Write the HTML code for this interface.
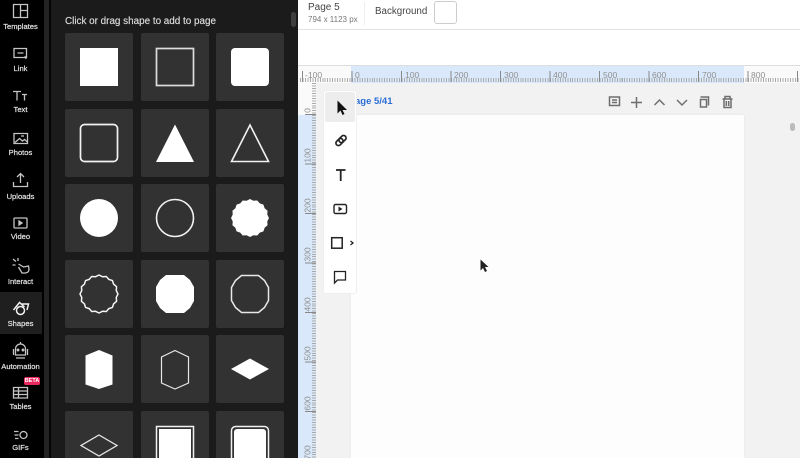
<!DOCTYPE html>
<html><head><meta charset="utf-8"><style>
html,body{margin:0;padding:0;width:800px;height:458px;overflow:hidden;background:#fff}
body{position:relative;font-family:"Liberation Sans",sans-serif}
.a{position:absolute}
.lbl{position:absolute;left:0;width:41px;text-align:center;color:#e2e2e2;font-size:7.6px;line-height:10px;white-space:nowrap;-webkit-text-stroke:.2px #e2e2e2}
.card{position:absolute;width:68px;height:68px;background:#323233;border-radius:2px}
.card svg{position:absolute;left:0;top:0}
.hn{position:absolute;top:70px;font-size:8.6px;line-height:11px;color:#8f8f8f}
.vn{position:absolute;left:297px;width:22px;font-size:8.6px;line-height:11px;color:#8f8f8f;transform:rotate(-90deg);text-align:center}
</style></head><body>
<!-- top bars -->
<div class="a" style="left:298px;top:29px;width:502px;height:1px;background:#e2e2e2"></div>
<div class="a" style="left:308px;top:1px;font-size:10px;line-height:14px;color:#444">Page 5</div>
<div class="a" style="left:308px;top:14px;font-size:8px;line-height:11px;color:#777">794 x 1123 px</div>
<div class="a" style="left:364px;top:2px;width:1px;height:23px;background:#eee"></div>
<div class="a" style="left:375px;top:5px;font-size:9.800px;line-height:14px;color:#444">Background</div>
<div class="a" style="left:434px;top:1px;width:21px;height:21px;border:1px solid #ccc;border-radius:3px;background:#fff"></div>
<!-- canvas -->
<div class="a" style="left:298px;top:83px;width:502px;height:375px;background:#f2f2f2"></div>
<div class="a" style="left:351px;top:115px;width:393px;height:343px;background:#fefdfe;box-shadow:0 0 3px rgba(0,0,0,.06)"></div>
<div class="a" style="left:790px;top:123px;width:5px;height:8px;border-radius:3px;background:#bbb"></div>
<!-- top ruler -->
<div class="a" style="left:298px;top:65px;width:502px;height:18px;background:#fafafa;border-top:1px solid #ddd;box-sizing:border-box"></div>
<div class="a" style="left:351px;top:66px;width:393px;height:17px;background:#d9e9fb"></div>
<div class="a" style="left:300px;top:78px;width:500px;height:4px;background:repeating-linear-gradient(90deg,#aaa 0,#aaa 1px,transparent 1px,transparent 2.475px)"></div>
<div class="a" style="left:302px;top:71px;width:498px;height:11px;background:repeating-linear-gradient(90deg,#888 0,#888 1px,transparent 1px,transparent 49.5px)"></div>
<span class="hn" style="left:305px">-100</span><span class="hn" style="left:355px">0</span><span class="hn" style="left:405px">100</span><span class="hn" style="left:454px">200</span><span class="hn" style="left:504px">300</span><span class="hn" style="left:553px">400</span><span class="hn" style="left:603px">500</span><span class="hn" style="left:652px">600</span><span class="hn" style="left:702px">700</span><span class="hn" style="left:751px">800</span>
<!-- left ruler -->
<div class="a" style="left:298px;top:83px;width:18px;height:375px;background:#fafafa"></div>
<div class="a" style="left:298px;top:115px;width:18px;height:343px;background:#d9e9fb"></div>
<div class="a" style="left:312px;top:83px;width:4px;height:375px;background:repeating-linear-gradient(180deg,#aaa 0,#aaa 1px,transparent 1px,transparent 2.475px)"></div>
<div class="a" style="left:305px;top:114px;width:11px;height:344px;background:repeating-linear-gradient(180deg,#888 0,#888 1px,transparent 1px,transparent 49.5px)"></div>
<span class="vn" style="top:105px">0</span><span class="vn" style="top:150px">100</span><span class="vn" style="top:200px">200</span><span class="vn" style="top:249px">300</span><span class="vn" style="top:299px">400</span><span class="vn" style="top:348px">500</span><span class="vn" style="top:398px">600</span><span class="vn" style="top:447px">700</span>
<!-- page label and actions -->
<div class="a" style="left:355px;top:96px;font-size:9.500px;line-height:12px;color:#2b6fd6;font-weight:bold">age 5/41</div>
<svg class="a" style="left:600px;top:90px" width="140" height="24" fill="none" stroke="#6e6e6e" stroke-width="1.500">
<path d="M9.500 7h10v8.500h-10zM12 10h5M12 12.500h5"/>
<path d="M36.500 7v11M31 12.500h11"/>
<path d="M54.500 15l5-5 5 5M77 10l5 5 5-5"/>
<path d="M100.500 7h8v8.500M100.500 9.500h6v7.500h-6z"/>
<path d="M122.500 9h10M125 8.500v-2h5v2M124 9.500v8h7v-8M126.300 11v5M128.700 11v5"/>
</svg>
<!-- floating toolbar -->
<div class="a" style="left:323px;top:90px;width:34px;height:204px;background:#fff;border:1px solid #eee;border-radius:3px;box-sizing:border-box"></div>
<div class="a" style="left:325px;top:92px;width:30px;height:30px;background:#ededed;border-radius:2px"></div>
<svg class="a" style="left:323px;top:90px" width="36" height="204">
<path d="M14.500 10.500v13l3-3 2 4.500 2-1-2-4h4.500z" fill="#111"/>
<g fill="none" stroke="#222" stroke-width="1.700"><rect x="12.500" y="49.500" width="8" height="5" rx="2.500" transform="rotate(-45 16.500 52)" /><rect x="15.500" y="46.500" width="8" height="5" rx="2.500" transform="rotate(-45 19.500 49)"/></g>
<path d="M13 80h9.500M17.700 80v11" fill="none" stroke="#222" stroke-width="1.800"/>
<rect x="11" y="114.500" width="12.500" height="9" rx="1.500" fill="none" stroke="#222" stroke-width="1.400"/><path d="M15.500 116.500v5l4-2.500z" fill="#222"/>
<rect x="8.700" y="147.700" width="10.500" height="10.500" fill="none" stroke="#222" stroke-width="1.500"/><path d="M27.500 151l2.500 2-2.500 2" fill="none" stroke="#222" stroke-width="1.300"/>
<path d="M11.500 181.500h11v8.500h-8l-3 3z" fill="none" stroke="#222" stroke-width="1.300"/>
</svg>
<svg class="a" style="left:478px;top:258px" width="14" height="16"><path d="M2.500 1.500v11l2.500-2.500 2 4 2-1-2-4h3.500z" fill="#222"/></svg>
<!-- panel -->
<div class="a" style="left:0;top:0;width:298px;height:458px;background:#1b1b1c"></div>
<div class="a" style="left:0;top:0;width:44px;height:458px;background:#000"></div>
<div class="a" style="left:44px;top:0;width:5px;height:458px;background:#232323"></div>
<div class="a" style="left:49px;top:0;width:2px;height:458px;background:#050505"></div>
<div class="a" style="left:291px;top:12px;width:5px;height:15px;background:#3f3f3f;border-radius:3px"></div>
<div class="a" style="left:0;top:292px;width:42px;height:42px;background:#1f1f1f"></div>
<div class="a" style="left:65px;top:15px;font-size:9.900px;line-height:13px;color:#ddd;white-space:nowrap;-webkit-text-stroke:.15px #ddd">Click or drag shape to add to page</div>
<!-- sidebar icons -->
<svg class="a" style="left:0;top:0" width="44" height="458" fill="none" stroke="#c4c4c4" stroke-width="1.300">
<path d="M13.500 4.500h14v13h-14zM20.500 4.500v13M20.500 10.500h7"/>
<path d="M14 48.500h12.500v9h-12.500zM17.500 53h6"/><path d="M24.500 56.500l2 2" stroke-width="1.800"/>
<path d="M13 91.500h8M17 91.500v9M22 94.500h5M24.500 94.500v6"/>
<path d="M14 133.500h13.500v10h-13.500z"/><path d="M15 142.500l4.500-4 3 2.500 2-1.500 3 2.500M21 136h3"/>
<path d="M20.500 183v-9M17 177l3.500-3.500 3.500 3.500M13.500 182v4.500h14V182"/>
<rect x="14" y="218" width="13" height="10" rx="1"/><path d="M19 221v4l3-2z" fill="#c4c4c4"/>
<path d="M13 259l3 2.500M18 258v3M12.500 265h3M18.500 264l5 3 5-1 .5 3c0 3-2 4-4 4h-3l-3.500-6"/>
<path d="M13.500 310l6-7.500 5 4.500M21 304h7.500l-1.500 6" stroke="#f0f0f0" stroke-width="1.500"/><circle cx="20.500" cy="310.500" r="4" stroke="#f0f0f0" stroke-width="1.500"/>
<path d="M15.500 349a5 5 0 0 1 10 0v6h-10zM20.500 344v-2M13.500 349v6M27.500 349v6M16 358h9"/><circle cx="18" cy="350" r=".8"/><circle cx="23" cy="350" r=".8"/>
<path d="M13.500 387.500h14v10.500h-14zM13.500 391h14M13.500 394.500h14M18.500 387.500v10.500"/>
<path d="M14 431.500h4.500M14.500 435h4M15 438.500h3.500"/><circle cx="23.500" cy="435" r="3.500"/>
</svg>
<div class="lbl" style="top:22px">Templates</div>
<div class="lbl" style="top:64px">Link</div>
<div class="lbl" style="top:105px">Text</div>
<div class="lbl" style="top:148px">Photos</div>
<div class="lbl" style="top:192px">Uploads</div>
<div class="lbl" style="top:232px">Video</div>
<div class="lbl" style="top:277px">Interact</div>
<div class="lbl" style="top:319px">Shapes</div>
<div class="lbl" style="top:362px">Automation</div>
<div class="lbl" style="top:402px">Tables</div>
<div class="lbl" style="top:443px">GIFs</div>
<div class="a" style="left:24px;top:377px;width:16px;height:8px;background:#e8285f;border-radius:2px;color:#fff;font-size:5.500px;font-weight:bold;line-height:8px;text-align:center">BETA</div>
<!-- shape cards -->
<div class="card" style="left:65px;top:33px"><svg width="68" height="68"><rect x="15" y="15" width="38" height="38" fill="#fff"/></svg></div>
<div class="card" style="left:141px;top:33px"><svg width="68" height="68"><rect x="15.500" y="15.500" width="37" height="37" fill="none" stroke="#ddd" stroke-width="1.700"/></svg></div>
<div class="card" style="left:216px;top:33px"><svg width="68" height="68"><rect x="15" y="15" width="38" height="38" rx="4" fill="#fff"/></svg></div>
<div class="card" style="left:65px;top:109px"><svg width="68" height="68"><rect x="15.500" y="15.500" width="37" height="37" rx="4" fill="none" stroke="#f2f2f2" stroke-width="1.700"/></svg></div>
<div class="card" style="left:141px;top:109px"><svg width="68" height="68"><path d="M34 15.500L53 53H15z" fill="#fff"/></svg></div>
<div class="card" style="left:216px;top:109px"><svg width="68" height="68"><path d="M34 16L52.500 52.500H15.500z" fill="none" stroke="#f2f2f2" stroke-width="1.600"/></svg></div>
<div class="card" style="left:65px;top:184px"><svg width="68" height="68"><circle cx="34" cy="34" r="19" fill="#fff"/></svg></div>
<div class="card" style="left:141px;top:184px"><svg width="68" height="68"><circle cx="34" cy="34" r="18.500" fill="none" stroke="#f2f2f2" stroke-width="1.600"/></svg></div>
<div class="card" style="left:216px;top:184px"><svg width="68" height="68"><polygon points="53,34 51.270,37.430 51.560,41.280 48.630,43.790 47.430,47.430 43.790,48.630 41.280,51.560 37.430,51.270 34,53 30.570,51.270 26.720,51.560 24.210,48.630 20.570,47.430 19.370,43.790 16.440,41.280 16.730,37.430 15,34 16.730,30.570 16.440,26.720 19.370,24.210 20.570,20.570 24.210,19.370 26.720,16.440 30.570,16.730 34,15 37.430,16.730 41.280,16.440 43.790,19.370 47.430,20.570 48.630,24.210 51.560,26.720 51.270,30.570" fill="#fff"/></svg></div>
<div class="card" style="left:65px;top:260px"><svg width="68" height="68"><polygon points="53,34 51.270,37.430 51.560,41.280 48.630,43.790 47.430,47.430 43.790,48.630 41.280,51.560 37.430,51.270 34,53 30.570,51.270 26.720,51.560 24.210,48.630 20.570,47.430 19.370,43.790 16.440,41.280 16.730,37.430 15,34 16.730,30.570 16.440,26.720 19.370,24.210 20.570,20.570 24.210,19.370 26.720,16.440 30.570,16.730 34,15 37.430,16.730 41.280,16.440 43.790,19.370 47.430,20.570 48.630,24.210 51.560,26.720 51.270,30.570" fill="none" stroke="#f5f5f5" stroke-width="1.500" stroke-linejoin="round"/></svg></div>
<div class="card" style="left:141px;top:260px"><svg width="68" height="68"><polygon points="25,15 43,15 49,20 53,27 53,41 49,48 43,53 25,53 19,48 15,41 15,27 19,20" fill="#fff"/></svg></div>
<div class="card" style="left:216px;top:260px"><svg width="68" height="68"><polygon points="25.500,15.500 42.500,15.500 48.500,20.500 52.500,27.500 52.500,40.500 48.500,47.500 42.500,52.500 25.500,52.500 19.500,47.500 15.500,40.500 15.500,27.500 19.500,20.500" fill="none" stroke="#e8e8e8" stroke-width="1.500"/></svg></div>
<div class="card" style="left:65px;top:335px"><svg width="68" height="68"><path d="M34 15l13.500 5.500v29L34 54l-13.500-4.500v-29z" fill="#fff"/></svg></div>
<div class="card" style="left:141px;top:335px"><svg width="68" height="68"><path d="M34 15.500l13.500 6.500v26L34 54l-13.500-6v-26z" fill="none" stroke="#e8e8e8" stroke-width="1.200"/></svg></div>
<div class="card" style="left:216px;top:335px"><svg width="68" height="68"><path d="M34 23.500L53 34 34 44.500 15 34z" fill="#fff"/></svg></div>
<div class="card" style="left:65px;top:411px;height:47px;border-radius:2px 2px 0 0"><svg width="68" height="47"><path d="M34 24l18 10.500L34 45 16 34.500z" fill="none" stroke="#e8e8e8" stroke-width="1.300"/></svg></div>
<div class="card" style="left:141px;top:411px;height:47px;border-radius:2px 2px 0 0"><svg width="68" height="47"><rect x="15.500" y="15.500" width="37" height="40" fill="none" stroke="#f2f2f2" stroke-width="1.500"/><rect x="18" y="18" width="32" height="40" fill="#fff"/></svg></div>
<div class="card" style="left:216px;top:411px;height:47px;border-radius:2px 2px 0 0"><svg width="68" height="47"><rect x="15.500" y="15.500" width="37" height="40" rx="4" fill="none" stroke="#f2f2f2" stroke-width="1.500"/><rect x="18" y="18" width="32" height="40" rx="3" fill="#fff"/></svg></div>
</body></html>
